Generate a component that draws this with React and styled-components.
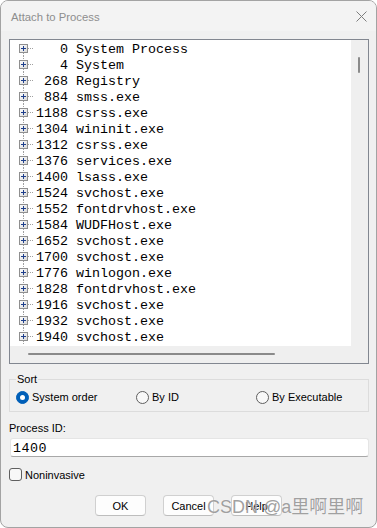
import React from "react";
import styled, { createGlobalStyle, css } from "styled-components";

const GlobalStyle = createGlobalStyle`
  html, body { margin: 0; padding: 0; background: #ffffff; }
  body { font-family: "Liberation Sans", Arial, sans-serif; }
  * { box-sizing: border-box; }
`;

const Window = styled.div`
  position: relative;
  width: 377px;
  height: 528px;
  border: 1px solid #a3a3a3;
  border-radius: 8px;
  background: #f0f0f0;
  overflow: hidden;
  display: flex;
  flex-direction: column;
  font-family: "Liberation Sans", Arial, sans-serif;
  font-size: 11px;
  color: #000;
`;

const TitleBar = styled.div`
  height: 30px;
  flex: none;
  display: flex;
  align-items: center;
  justify-content: space-between;
  padding: 0 10px 0 10px;
  background: #f3f3f3;
`;

const Title = styled.span`
  font-size: 11.3px;
  color: #8e8e8e;
  line-height: 14px;
  margin-top: 1px;
`;

const CloseIcon = styled.svg`
  display: block;
  margin-right: -1px;
  margin-top: 1px;
`;

const Body = styled.div`
  flex: 1;
  display: flex;
  flex-direction: column;
  padding: 8px 7px 0 8px;
`;

const TreeFrame = styled.div`
  width: 360px;
  height: 325px;
  flex: none;
  border: 1px solid #828790;
  display: grid;
  grid-template-columns: 341px 17px;
  grid-template-rows: 306px 17px;
  background: #f0f0f0;
`;

const TreeList = styled.div`
  background: #ffffff;
  overflow: hidden;
`;

const Row = styled.div`
  display: flex;
  align-items: center;
  height: 16px;
`;

const RowText = styled.span`
  margin-top: 3px;
  white-space: pre;
  font-family: "Liberation Mono", "DejaVu Sans Mono", monospace;
  font-size: 13.33px;
  line-height: 16px;
  color: #000;
`;

const Glyph = styled.svg`
  display: block;
  flex: none;
`;

const VScroll = styled.div`
  background: #efefef;
`;

const VThumb = styled.div`
  width: 2px;
  height: 16px;
  margin: 17px 0 0 7px;
  background: #8a8a8a;
  border-radius: 1px;
`;

const HScroll = styled.div`
  background: #efefef;
  padding: 7px 0 0 18px;
`;

const HThumb = styled.div`
  width: 247px;
  height: 2px;
  background: #8a8a8a;
  border-radius: 1px;
`;

const Corner = styled.div`
  background: #efefef;
`;

const GroupBox = styled.fieldset`
  margin: 8px 0 0 0;
  width: 360px;
  border: 1px solid #dcdcdc;
  border-radius: 0;
  padding: 4px 0 7px 6px;
  min-inline-size: 0;
`;

const Legend = styled.legend`
  padding: 0 1px;
  font-size: 11px;
  line-height: 14px;
`;

const RadioRow = styled.div`
  display: grid;
  grid-template-columns: repeat(3, 120px);
  height: 13px;
  margin-top: 1px;
`;

const Choice = styled.label`
  display: flex;
  align-items: center;
  gap: 3px;
  line-height: 13px;
  font-size: 11px;
`;

const RadioDot = styled.span`
  width: 13px;
  height: 13px;
  flex: none;
  border-radius: 50%;
  border: 1px solid #5f5f5f;
  background: #f8f8f8;
  display: flex;
  align-items: center;
  justify-content: center;
  ${(p) =>
    p.$checked &&
    css`
      border-color: #005fb8;
      background: #005fb8;
      &::after {
        content: "";
        width: 5px;
        height: 5px;
        border-radius: 50%;
        background: #ffffff;
      }
    `}
`;

const FieldLabel = styled.div`
  margin-top: 9px;
  line-height: 14px;
  font-size: 11px;
`;

const TextInput = styled.div`
  margin: 3px 0 0 1px;
  width: 359px;
  height: 19px;
  background: #ffffff;
  border: 1px solid #e5e5e5;
  border-bottom-color: #a8a8a8;
  border-radius: 3px;
  padding: 1px 0 0 2px;
  display: flex;
  align-items: center;
  font-family: "Liberation Mono", "DejaVu Sans Mono", monospace;
  font-size: 13.33px;
  letter-spacing: 0.5px;
`;

const CheckRow = styled.label`
  margin-top: 11px;
  display: flex;
  align-items: center;
  gap: 3px;
  height: 13px;
  font-size: 11px;
`;

const CheckBox = styled.span`
  width: 13px;
  height: 13px;
  flex: none;
  border: 1px solid #5f5f5f;
  border-radius: 3px;
  background: #f8f8f8;
`;

const ButtonRow = styled.div`
  margin-top: 14px;
  margin-left: -8px;
  margin-right: -7px;
  display: flex;
  justify-content: center;
  gap: 17px;
`;

const Button = styled.div`
  width: 51px;
  height: 21px;
  background: #fdfdfd;
  border: 1px solid #d0d0d0;
  border-bottom-color: #bdbdbd;
  border-radius: 4px;
  display: flex;
  align-items: center;
  justify-content: center;
  font-size: 11px;
  color: #000;
`;

const Watermark = styled.div`
  position: absolute;
  left: 206px;
  top: 496px;
  font-family: "Liberation Sans", "Noto Sans CJK SC", sans-serif;
  font-size: 18px;
  line-height: 21px;
  color: rgba(135, 135, 135, 0.8);
  text-shadow: 0 0 1px rgba(255, 255, 255, 0.9);
  white-space: nowrap;
  pointer-events: none;
`;

const processes = [
  [0, "System Process"],
  [4, "System"],
  [268, "Registry"],
  [884, "smss.exe"],
  [1188, "csrss.exe"],
  [1304, "wininit.exe"],
  [1312, "csrss.exe"],
  [1376, "services.exe"],
  [1400, "lsass.exe"],
  [1524, "svchost.exe"],
  [1552, "fontdrvhost.exe"],
  [1584, "WUDFHost.exe"],
  [1652, "svchost.exe"],
  [1700, "svchost.exe"],
  [1776, "winlogon.exe"],
  [1828, "fontdrvhost.exe"],
  [1916, "svchost.exe"],
  [1932, "svchost.exe"],
  [1940, "svchost.exe"],
];

function TreeGlyph({ first }) {
  return (
    <Glyph width="26" height="16" viewBox="0 0 26 16" shapeRendering="crispEdges">
      {!first && (
        <line x1="13.5" y1="0" x2="13.5" y2="4" stroke="#a0a0a0" strokeDasharray="1 1" />
      )}
      <line x1="13.5" y1="13" x2="13.5" y2="16" stroke="#a0a0a0" strokeDasharray="1 1" />
      <line x1="18" y1="8.5" x2="24" y2="8.5" stroke="#a0a0a0" strokeDasharray="1 1" />
      <defs>
        <linearGradient id="pbox" x1="0" y1="0" x2="1" y2="1">
          <stop offset="0" stopColor="#ffffff" />
          <stop offset="1" stopColor="#d8d8d8" />
        </linearGradient>
      </defs>
      <rect x="9.5" y="4.5" width="8" height="8" fill="url(#pbox)" stroke="#8f8f8f" />
      <line x1="11" y1="8.5" x2="16" y2="8.5" stroke="#1e3f8c" />
      <line x1="13.5" y1="6" x2="13.5" y2="11" stroke="#1e3f8c" />
    </Glyph>
  );
}

export default function App() {
  return (
    <>
      <GlobalStyle />
      <Window>
        <TitleBar>
          <Title>Attach to Process</Title>
          <CloseIcon width="11" height="11" viewBox="0 0 11 11">
            <path d="M0.5 0.5 L10.5 10.5 M10.5 0.5 L0.5 10.5" stroke="#7d7d7d" strokeWidth="1" />
          </CloseIcon>
        </TitleBar>
        <Body>
          <TreeFrame>
            <TreeList>
              {processes.map(([pid, name], i) => (
                <Row key={pid}>
                  <TreeGlyph first={i === 0} />
                  <RowText>{String(pid).padStart(4, " ") + " " + name}</RowText>
                </Row>
              ))}
            </TreeList>
            <VScroll>
              <VThumb />
            </VScroll>
            <HScroll>
              <HThumb />
            </HScroll>
            <Corner />
          </TreeFrame>

          <GroupBox>
            <Legend>Sort</Legend>
            <RadioRow>
              <Choice>
                <RadioDot $checked />
                System order
              </Choice>
              <Choice>
                <RadioDot />
                By ID
              </Choice>
              <Choice>
                <RadioDot />
                By Executable
              </Choice>
            </RadioRow>
          </GroupBox>

          <FieldLabel>Process ID:</FieldLabel>
          <TextInput>1400</TextInput>

          <CheckRow>
            <CheckBox />
            Noninvasive
          </CheckRow>

          <ButtonRow>
            <Button>OK</Button>
            <Button>Cancel</Button>
            <Button>Help</Button>
          </ButtonRow>
        </Body>
        <Watermark>CSDN @a里啊里啊</Watermark>
      </Window>
    </>
  );
}
